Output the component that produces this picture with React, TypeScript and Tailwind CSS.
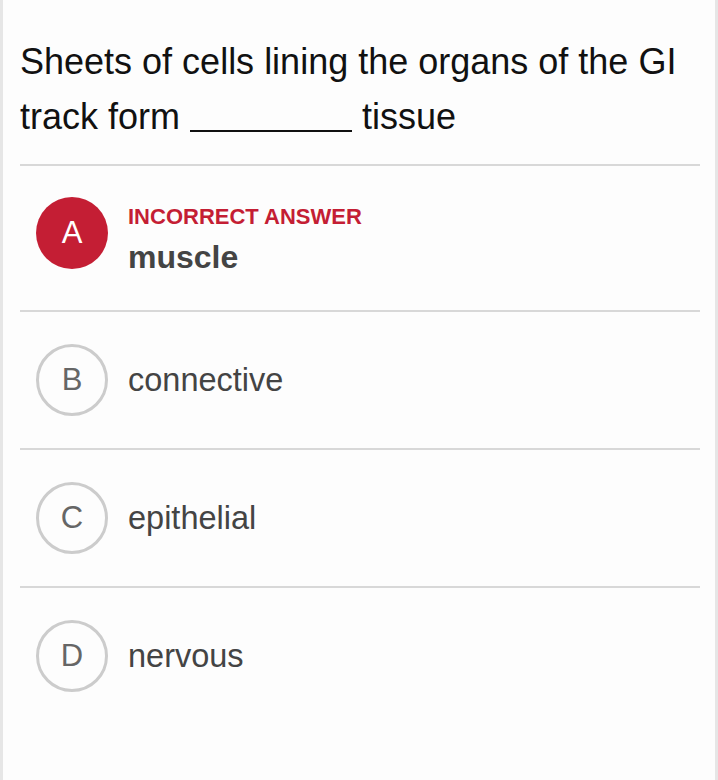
import React from "react";

const font = { fontFamily: '"Liberation Sans", Arial, Helvetica, sans-serif' };

function Option({ letter, text }: { letter: string; text: string }) {
  return (
    <div className="flex items-center border-t-2 border-[#d8d8d8] pt-[32px] pb-[32px]">
      <div className="ml-[16px] w-[72px] h-[72px] rounded-full border-[3px] border-[#cccccc] flex items-center justify-center text-[31px] text-[#666666] shrink-0">
        {letter}
      </div>
      <div className="ml-[20px] text-[32.5px] text-[#444444] leading-[36px]">{text}</div>
    </div>
  );
}

export default function App() {
  return (
    <div
      className="w-[718px] h-[780px] bg-[#fdfdfd] border-l-[3px] border-r-[3px] border-[#e6e6e6] pl-[17px] pr-[15px] pt-[34px]"
      style={font}
    >
      <div className="text-[36px] leading-[55px] text-[#111111]">
        Sheets of cells lining the organs of the GI track form{" "}
        <span className="inline-block w-[162px] h-[2px] bg-[#111111] align-[-3px]"></span>{" "}
        tissue
      </div>
      <div className="mt-[20px] flex items-start border-t-2 border-[#d8d8d8] pt-[31px] pb-[35px]">
        <div className="ml-[16px] w-[72px] h-[72px] rounded-full bg-[#c41e34] flex items-center justify-center text-[31px] text-white shrink-0">
          A
        </div>
        <div className="ml-[20px] mt-[7px]">
          <div className="text-[22px] leading-[26px] font-bold text-[#c41e34]">INCORRECT ANSWER</div>
          <div className="mt-[9px] text-[32px] leading-[36px] font-bold text-[#444444]">muscle</div>
        </div>
      </div>
      <Option letter="B" text="connective" />
      <Option letter="C" text="epithelial" />
      <Option letter="D" text="nervous" />
    </div>
  );
}
